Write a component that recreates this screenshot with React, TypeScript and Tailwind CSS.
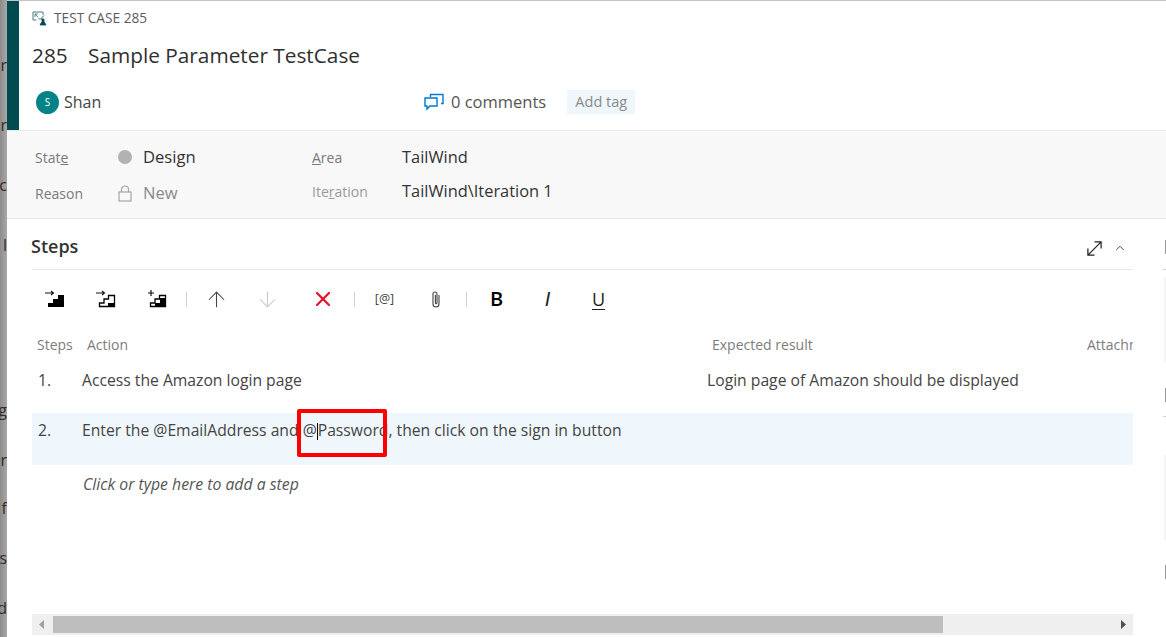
import { ArrowDown, ArrowUp, ChevronUp, X } from "lucide-react";

const font = "[font-family:'Open_Sans','Noto_Sans',sans-serif]";

// clipped text of the page behind the dialog
const behind = [
  { t: "r", cls: "h-[60px]" },
  { t: "r", cls: "h-[60px]" },
  { t: "c", cls: "h-[60px]" },
  { t: "l", cls: "h-[60px]" },
  { t: "", cls: "h-[105px]" },
  { t: "g", cls: "h-[50px]" },
  { t: "ar", cls: "h-[48px]" },
  { t: "f", cls: "h-[50px]" },
  { t: "s", cls: "h-[50px]" },
  { t: "d", cls: "h-[50px]" },
];

function Stairs({ mark }: { mark: "solid" | "arrow" | "plus" }) {
  return (
    <svg width="20" height="20" viewBox="0 0 20 20">
      {mark === "plus" ? (
        <path d="M4 1v6M1 4h6" stroke="#111" strokeWidth="1.2" fill="none" />
      ) : (
        <path d="M0 4h8M6 2l2.5 2L6 6" stroke="#111" strokeWidth="1.1" fill="none" />
      )}
      {mark === "solid" ? (
        <path d="M3 18v-4h5v-4h5V6h6v12z" fill="#000" />
      ) : (
        <>
          <path d="M3.5 17.5v-3.5h4.5v-4h4.5V6.5h6v11z" fill="#fff" stroke="#000" strokeWidth="1.3" />
          <path d={mark === "plus" ? "M8 18v-4h5V9h6v9z" : "M12 18v-4h7v4z"} fill="#000" />
        </>
      )}
    </svg>
  );
}

function Sep() {
  return <div className="w-px h-[15px] bg-[#d0d0d0]" />;
}

function Tool({ className, children }: { className?: string; children: React.ReactNode }) {
  return <div className={`w-[51px] shrink-0 flex items-center justify-center ${className ?? ""}`}>{children}</div>;
}

function Field({ label, children }: { label: React.ReactNode; children: React.ReactNode }) {
  return (
    <div className="flex items-center h-9">
      <div className="w-[83px] text-[14px] text-[#7a7a7a]">{label}</div>
      {children}
    </div>
  );
}

export default function App() {
  return (
    <div className={`flex w-full h-[637px] overflow-hidden bg-white text-[#333] ${font}`}>
      <div className="w-[7px] shrink-0 h-full overflow-hidden bg-gradient-to-r from-[#8c8c8c] to-[#a8a8a8] pt-[50px]">
        {behind.map((b, i) => (
          <div key={i} className={`${b.cls} flex justify-end text-[16px] leading-[30px] text-[#3a2a20]`}>
            {b.t}
          </div>
        ))}
      </div>

      <div className="flex-1 min-w-0 flex flex-col border-t border-[#c4c4c4]">
        {/* header */}
        <div className="flex h-[129px] shrink-0">
          <div className="w-3 bg-[#004b50]" />
          <div className="flex-1 pl-[13px]">
            <div className="flex items-center gap-[7px] h-[34px]">
              <svg width="15" height="15" viewBox="0 0 15 15" fill="none">
                <path d="M11 4V1H1v8h3.5" stroke="#4a7d80" strokeWidth="1" />
                <path d="M3 3l3 3M3 6V3h3" stroke="#3c6c70" strokeWidth="0.8" />
                <path d="M6.5 7l1.5 1.5L12 4.5" stroke="#3c6c70" strokeWidth="1" />
                <path d="M9 8h3M10 8v2.5L8 14h6l-2-3.5V8" fill="#004b50" stroke="#004b50" strokeWidth="0.8" />
              </svg>
              <span className="text-[13.7px] text-[#5c5c5c]">TEST CASE 285</span>
            </div>
            <div className="flex items-center h-[42px] text-[20.8px] text-[#2f2f2f]">
              <span className="w-[56px]">285</span>
              <span>Sample Parameter TestCase</span>
            </div>
            <div className="flex items-center h-[50px] mt-0">
              <div className="flex items-center w-[392px]">
                <div className="ml-1 w-[23px] h-[23px] rounded-full bg-[#038387] flex items-center justify-center text-[10px] text-white">
                  S
                </div>
                <span className="ml-[5px] text-[16px] text-[#444]">Shan</span>
              </div>
              <svg width="20" height="18" viewBox="0 0 20 18" fill="none" stroke="#0078d4" strokeWidth="1.4">
                <path d="M6.5 4V1.5h12.5v9h-2" />
                <path d="M1 5h12v8H6l-3 3v-3H1z" />
              </svg>
              <span className="ml-[7px] text-[16.5px] text-[#555]">0 comments</span>
              <span className="ml-[21px] h-[24px] w-[68px] bg-[#eff6fc] flex items-center justify-center text-[14.5px] text-[#8a8a8a]">
                Add tag
              </span>
            </div>
          </div>
        </div>

        {/* fields */}
        <div className="h-[89px] shrink-0 bg-[#f8f8f8] border-y border-[#e8e8e8] pl-7 pt-2 flex">
          <div className="w-[277px]">
            <Field
              label={
                <>
                  Stat<span className="underline">e</span>
                </>
              }
            >
              <span className="w-[14px] h-[14px] rounded-full bg-[#b2b2b2] mr-[11px]" />
              <span className="text-[16.6px] text-[#333]">Design</span>
            </Field>
            <Field label="Reason">
              <svg width="14" height="17" viewBox="0 0 14 17" fill="none" stroke="#a6a6a6" strokeWidth="1.2" className="mr-[11px]">
                <rect x="1" y="7" width="12" height="9" />
                <path d="M3.5 7V4.5a3.5 3.5 0 0 1 7 0V7" />
              </svg>
              <span className="text-[16.6px] text-[#8a8a8a]">New</span>
            </Field>
          </div>
          <div>
            <div className="flex items-center h-9">
              <div className="w-[90px] text-[14px] text-[#7a7a7a]">
                <span className="underline">A</span>rea
              </div>
              <span className="text-[16.4px] text-[#333]">TailWind</span>
            </div>
            <div className="flex items-center h-[32px]">
              <div className="w-[90px] text-[14px] text-[#9a9a9a]">
                Ite<span className="underline">r</span>ation
              </div>
              <span className="text-[16.4px] text-[#333]">TailWind\Iteration 1</span>
            </div>
          </div>
        </div>

        {/* steps */}
        <div className="flex-1 flex min-h-0">
          <div className="w-[1126px] shrink-0 pl-[25px] flex flex-col">
            <div className="h-[51px] pt-[5px] border-b border-[#e6e6e6] flex items-center justify-between">
              <span className="-ml-px text-[18px] font-semibold text-[#333]">Steps</span>
              <div className="flex items-center gap-[10px] pr-[6px] mt-[3px]">
                <svg width="17" height="17" viewBox="0 0 18 18" fill="none" stroke="#222" strokeWidth="1.3">
                  <path d="M2 16L16 2M9 2h7v7M2 9v7h7" />
                </svg>
                <ChevronUp size={14} strokeWidth={1.5} color="#333" />
              </div>
            </div>

            <div className="h-[58px] flex items-center -ml-[3px]">
              <Tool><Stairs mark="solid" /></Tool>
              <Tool><Stairs mark="arrow" /></Tool>
              <Tool><Stairs mark="plus" /></Tool>
              <div className="ml-1"><Sep /></div>
              <Tool className="ml-1"><ArrowUp size={25} strokeWidth={1} color="#444" /></Tool>
              <Tool><ArrowDown size={25} strokeWidth={1} color="#c8c8c8" /></Tool>
              <Tool className="ml-1"><X size={24} strokeWidth={2.2} color="#e81123" /></Tool>
              <div className="ml-[6px]"><Sep /></div>
              <Tool className="ml-1"><span className="text-[12.5px] text-[#444]">[@]</span></Tool>
              <Tool>
                <svg width="14" height="18" viewBox="0 0 14 18" fill="none" stroke="#444" strokeWidth="1.1">
                  <path d="M10 5v9a3 3 0 0 1-6 0V4a2 2 0 0 1 4 0v9a.8.8 0 0 1-1.6 0V5" />
                </svg>
              </Tool>
              <div className="ml-[5px]"><Sep /></div>
              <Tool className="ml-1"><span className="text-[20px] font-semibold text-black">B</span></Tool>
              <Tool><span className="text-[20px] italic text-[#222] [font-family:'Liberation_Sans',sans-serif]">I</span></Tool>
              <Tool><span className="text-[18px] underline underline-offset-[3px] text-[#222]">U</span></Tool>
            </div>

            <div className="w-[1101px] flex-1 min-h-0 overflow-hidden relative">
              <div className="grid grid-cols-[50px_625px_375px_52px] h-[34px] items-center pl-[5px] pb-[2px] text-[14px] text-[#7d7d7d] overflow-hidden">
                <span>Steps</span>
                <span>Action</span>
                <span>Expected result</span>
                <span className="whitespace-nowrap overflow-hidden">Attachments</span>
              </div>
              <div className="grid grid-cols-[44px_625px_426px] h-[38px] items-center pl-[6px] text-[15.7px] text-[#444]">
                <span>1.</span>
                <span>Access the Amazon login page</span>
                <span>Login page of Amazon should be displayed</span>
              </div>
              <div className="h-[13px]" />
              <div className="grid grid-cols-[44px_1051px] h-[52px] items-start pl-[6px] pt-[6px] bg-[#eff6fc] text-[15.7px] text-[#444]">
                <span>2.</span>
                <span>
                  Enter the @EmailAddress and @<span className="inline-block w-px h-[17px] bg-black align-middle" />Password, then click on the sign in button
                </span>
              </div>
              <div className="h-[40px] pl-[51px] flex items-center italic text-[15.8px] text-[#555]">Click or type here to add a step</div>
              <div className="absolute left-[265px] top-[81px] w-[90px] h-[48px] border-[4px] border-[#f00] rounded-[2px]" />
              <div className="absolute left-0 right-0 bottom-[2px] h-[21px] bg-[#efefef] flex items-center">
                <svg width="21" height="17" viewBox="0 0 21 17" className="shrink-0">
                  <path d="M7 8.5L12 4v9z" fill="#a0a0a0" />
                </svg>
                <div className="w-[890px] h-[17px] bg-[#bebebe]" />
                <div className="flex-1" />
                <svg width="21" height="17" viewBox="0 0 21 17" className="shrink-0">
                  <path d="M14 8.5L9 4v9z" fill="#505050" />
                </svg>
              </div>
            </div>
          </div>
          <div className="flex-1 flex flex-col items-end pt-[21px]">
            <div className="w-px h-[14px] bg-[#9a9a9a]" />
            <div className="h-[15px]" />
            <div className="w-[3px] h-px bg-[#d0d0d0]" />
            <div className="h-[7px]" />
            <div className="w-[2px] h-[85px] bg-[#f4f4f4]" />
            <div className="h-[26px]" />
            <div className="w-px h-[14px] bg-[#9a9a9a]" />
            <div className="h-[14px]" />
            <div className="w-[3px] h-px bg-[#d0d0d0]" />
            <div className="h-[38px]" />
            <div className="w-[2px] h-[85px] bg-[#f4f4f4]" />
            <div className="h-[25px]" />
            <div className="w-px h-[14px] bg-[#9a9a9a]" />
          </div>
        </div>
      </div>
    </div>
  );
}
